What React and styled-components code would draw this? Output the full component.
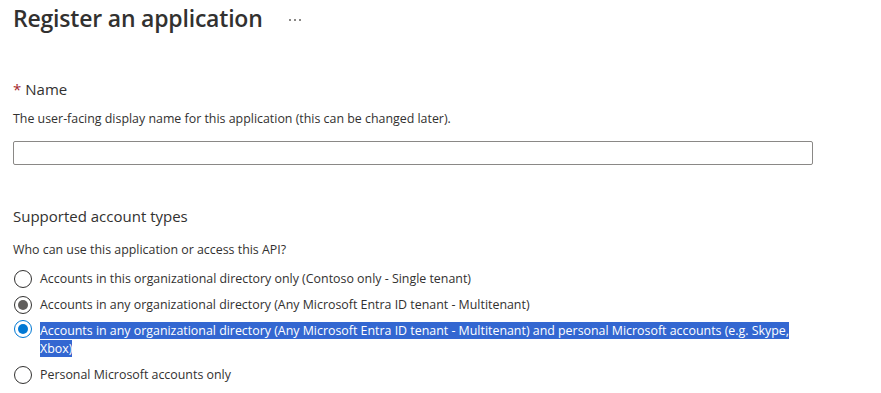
import React from "react";
import styled, { createGlobalStyle } from "styled-components";

const GlobalStyle = createGlobalStyle`
  html, body {
    margin: 0;
    padding: 0;
    background: #ffffff;
  }
  body {
    font-family: "Segoe UI", "Open Sans", "Noto Sans", sans-serif;
    color: #323130;
  }
`;

const Page = styled.div`
  padding: 0 13px;
  width: 881px;
  box-sizing: border-box;
`;

const Header = styled.div`
  display: flex;
  align-items: center;
  height: 36px;
  gap: 26px;
`;

const Title = styled.h1`
  margin: 0;
  font-size: 23px;
  font-weight: 600;
  line-height: 36px;
  color: #323130;
  letter-spacing: -0.2px;
`;

const MoreButton = styled.span`
  display: flex;
  gap: 3px;
  align-items: center;
  padding-top: 4px;
  span {
    width: 2px;
    height: 2px;
    background: #8a8886;
  }
`;

const Label = styled.div`
  margin-top: ${p => p.$top || 0}px;
  font-size: 15px;
  line-height: 22px;
  color: #323130;
`;

const Required = styled.span`
  color: #a4262c;
  margin-right: 4px;
`;

const Help = styled.div`
  margin-top: ${p => p.$top || 0}px;
  font-size: 12.4px;
  line-height: 18px;
  color: #323130;
`;

const Input = styled.input`
  display: block;
  margin-top: 13px;
  width: 800px;
  height: 24px;
  box-sizing: border-box;
  border: 1px solid #8a8886;
  border-radius: 2px;
  outline: none;
  padding: 0 8px;
  font: inherit;
`;

const Options = styled.div`
  margin-top: 11px;
  display: flex;
  flex-direction: column;
  gap: 8px;
`;

const Option = styled.label`
  display: flex;
  align-items: flex-start;
  gap: 8px;
  font-size: 12.4px;
  line-height: 18px;
  color: #323130;
`;

const Radio = styled.span`
  flex: none;
  width: 18px;
  height: 18px;
  margin-left: 1px;
  margin-top: ${p => (p.$tall ? -2 : 0)}px;
  box-sizing: border-box;
  border-radius: 50%;
  border: 1px solid ${p => (p.$state === "selected" ? "#0078d4" : "#323130")};
  display: flex;
  align-items: center;
  justify-content: center;
  &::after {
    content: "";
    width: 10px;
    height: 10px;
    border-radius: 50%;
    display: ${p => (p.$state ? "block" : "none")};
    background: ${p => (p.$state === "selected" ? "#0078d4" : "#605e5c")};
  }
`;

const Selected = styled.span`
  background: #3367d1;
  color: #ffffff;
`;

export default function App() {
  return (
    <Page>
      <GlobalStyle />
      <Header>
        <Title>Register an application</Title>
        <MoreButton>
          <span />
          <span />
          <span />
        </MoreButton>
      </Header>

      <Label $top={42}>
        <Required>*</Required>Name
      </Label>
      <Help $top={10}>
        The user-facing display name for this application (this can be changed later).
      </Help>
      <Input type="text" />

      <Label $top={40}>Supported account types</Label>
      <Help $top={14}>Who can use this application or access this API?</Help>
      <Options>
        <Option>
          <Radio />
          <span>Accounts in this organizational directory only (Contoso only - Single tenant)</span>
        </Option>
        <Option>
          <Radio $state="hover" />
          <span>Accounts in any organizational directory (Any Microsoft Entra ID tenant - Multitenant)</span>
        </Option>
        <Option>
          <Radio $state="selected" $tall />
          <span>
            <Selected>
              Accounts in any organizational directory (Any Microsoft Entra ID tenant - Multitenant) and personal Microsoft accounts (e.g. Skype,
              <br />
              Xbox)
            </Selected>
          </span>
        </Option>
        <Option>
          <Radio />
          <span>Personal Microsoft accounts only</span>
        </Option>
      </Options>
    </Page>
  );
}
